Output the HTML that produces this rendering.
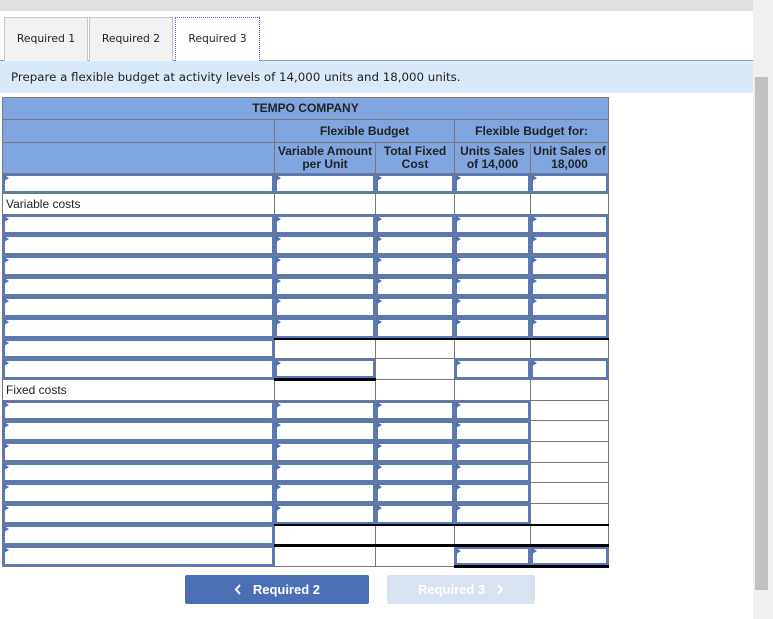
<!DOCTYPE html>
<html><head><style>
*{margin:0;padding:0;box-sizing:border-box}
body{width:773px;height:619px;overflow:hidden;background:#fff;font-family:"Liberation Sans",Arial,sans-serif;position:relative}
.top{position:absolute;left:0;top:0;width:753px;height:11px;background:#e0e0e0}
.sb{position:absolute;left:753px;top:0;width:20px;height:619px;background:#f0f0f0}
.th{position:absolute;left:755px;top:77px;width:13px;height:513px;background:#c1c1c1}
.tab{position:absolute;top:17px;height:44px;border:1px solid #c8c8c8;border-bottom:none;background:#f2f2f2;font-family:"DejaVu Sans",sans-serif;font-size:10.8px;color:#222;text-align:center;line-height:42px}
.tab.a{background:#fff;border:1px dotted #4a6db5;border-bottom:none;height:44px}
.line{position:absolute;left:0;top:60px;width:753px;height:1px;background:#999}
.band{position:absolute;left:0;top:61px;width:753px;height:32px;background:#dbeaf8;font-family:"DejaVu Sans",sans-serif;font-size:11.8px;color:#222;padding-left:11px;line-height:32px}
table{position:absolute;left:2px;top:97px;border-collapse:collapse;table-layout:fixed;width:606px}
td{border:1px solid #777;position:relative;padding:0;font-size:12px;color:#222}
.h td{background:#7fa6e0;font-weight:bold;text-align:center;line-height:13px}
.i{position:absolute;left:0;top:0;right:0;bottom:0;border:2px solid #5678bd}
.i:before{content:"";position:absolute;left:-1px;top:-1px;border-left:5px solid #4a6fc0;border-top:3px solid transparent;border-bottom:3px solid transparent}
.bt{border-top:2px solid #000}
.bb{border-bottom:3px solid #000}
.lb{padding-left:3px;font-size:12px}
.btn{position:absolute;top:575px;height:29px;border-radius:2px;color:#fff;font-weight:bold;font-size:13px;text-align:center;line-height:29px}
.btn svg{vertical-align:-1px}
</style></head><body>
<div class="top"></div>
<div class="sb"></div><div class="th"></div>
<div class="line"></div>
<div class="tab" style="left:4px;width:84px">Required 1</div>
<div class="tab" style="left:89px;width:84px">Required 2</div>
<div class="tab a" style="left:175px;width:85px">Required 3</div>
<div class="band">Prepare a flexible budget at activity levels of 14,000 units and 18,000 units.</div>
<table>
<colgroup><col style="width:272px"><col style="width:101px"><col style="width:79px"><col style="width:76px"><col style="width:78px"></colgroup>
<tr class="h" style="height:22px"><td colspan="5">TEMPO COMPANY</td></tr>
<tr class="h" style="height:23px"><td></td><td colspan="2">Flexible Budget</td><td colspan="2">Flexible Budget for:</td></tr>
<tr class="h" style="height:31px"><td></td><td>Variable Amount per Unit</td><td>Total Fixed Cost</td><td>Units Sales of 14,000</td><td>Unit Sales of 18,000</td></tr>
<tr style="height:20px"><td><div class="i"></div></td><td><div class="i"></div></td><td><div class="i"></div></td><td><div class="i"></div></td><td><div class="i"></div></td></tr>
<tr style="height:21px"><td class="lb">Variable costs</td><td></td><td></td><td></td><td></td></tr>
<tr style="height:20px"><td><div class="i"></div></td><td><div class="i"></div></td><td><div class="i"></div></td><td><div class="i"></div></td><td><div class="i"></div></td></tr>
<tr style="height:21px"><td><div class="i"></div></td><td><div class="i"></div></td><td><div class="i"></div></td><td><div class="i"></div></td><td><div class="i"></div></td></tr>
<tr style="height:21px"><td><div class="i"></div></td><td><div class="i"></div></td><td><div class="i"></div></td><td><div class="i"></div></td><td><div class="i"></div></td></tr>
<tr style="height:20px"><td><div class="i"></div></td><td><div class="i"></div></td><td><div class="i"></div></td><td><div class="i"></div></td><td><div class="i"></div></td></tr>
<tr style="height:21px"><td><div class="i"></div></td><td><div class="i"></div></td><td><div class="i"></div></td><td><div class="i"></div></td><td><div class="i"></div></td></tr>
<tr style="height:21px"><td><div class="i"></div></td><td><div class="i"></div></td><td><div class="i"></div></td><td><div class="i"></div></td><td><div class="i"></div></td></tr>
<tr style="height:20px"><td><div class="i"></div></td><td class="bt"></td><td class="bt"></td><td class="bt"></td><td class="bt"></td></tr>
<tr style="height:21px"><td><div class="i"></div></td><td class="bb"><div class="i"></div></td><td></td><td><div class="i"></div></td><td><div class="i"></div></td></tr>
<tr style="height:21px"><td class="lb">Fixed costs</td><td></td><td></td><td></td><td></td></tr>
<tr style="height:20px"><td><div class="i"></div></td><td><div class="i"></div></td><td><div class="i"></div></td><td><div class="i"></div></td><td></td></tr>
<tr style="height:21px"><td><div class="i"></div></td><td><div class="i"></div></td><td><div class="i"></div></td><td><div class="i"></div></td><td></td></tr>
<tr style="height:21px"><td><div class="i"></div></td><td><div class="i"></div></td><td><div class="i"></div></td><td><div class="i"></div></td><td></td></tr>
<tr style="height:20px"><td><div class="i"></div></td><td><div class="i"></div></td><td><div class="i"></div></td><td><div class="i"></div></td><td></td></tr>
<tr style="height:21px"><td><div class="i"></div></td><td><div class="i"></div></td><td><div class="i"></div></td><td><div class="i"></div></td><td></td></tr>
<tr style="height:21px"><td><div class="i"></div></td><td><div class="i"></div></td><td><div class="i"></div></td><td><div class="i"></div></td><td></td></tr>
<tr style="height:21px"><td><div class="i"></div></td><td class="bt bb"></td><td class="bt bb"></td><td class="bt bb"></td><td class="bt bb"></td></tr>
<tr style="height:21px"><td><div class="i"></div></td><td></td><td></td><td class="bb"><div class="i"></div></td><td class="bb"><div class="i"></div></td></tr>
</table>
<div class="btn" style="left:185px;width:184px;background:#4a6fb5"><svg width="8" height="11" viewBox="0 0 8 11"><path d="M6 1L2 5.5L6 10" stroke="#fff" stroke-width="2" fill="none"/></svg>&nbsp;&nbsp; Required 2</div>
<div class="btn" style="left:387px;width:148px;background:#d9e2f0">Required 3 &nbsp;&nbsp;<svg width="8" height="11" viewBox="0 0 8 11"><path d="M2 1L6 5.5L2 10" stroke="#fff" stroke-width="2" fill="none"/></svg></div>
</body></html>
